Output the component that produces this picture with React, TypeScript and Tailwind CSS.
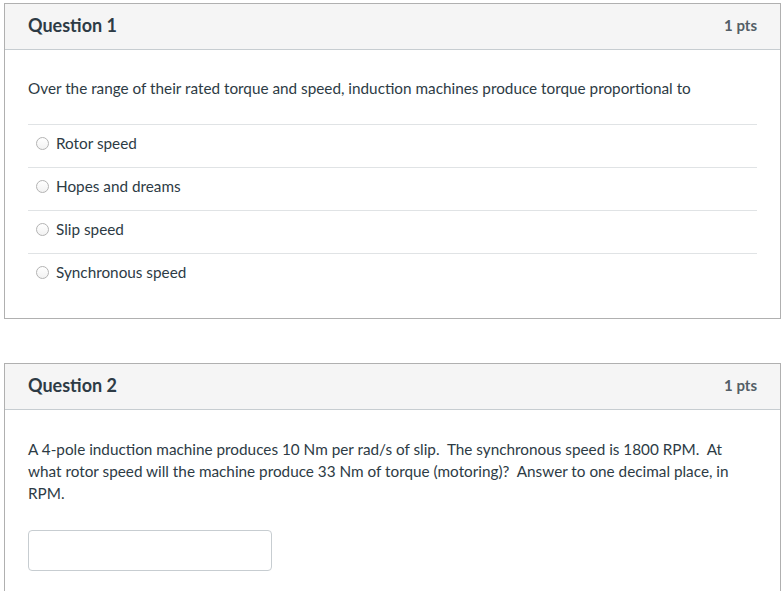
const OPTIONS = ['Rotor speed', 'Hopes and dreams', 'Slip speed', 'Synchronous speed']

function Header({ title }: { title: string }) {
  return (
    <div className="flex items-center justify-between h-[46px] pb-[2px] px-[23px] bg-[#f5f5f5] border-b border-[#c7cdd1]">
      <div className="text-[18px] font-bold text-[#2d3b45]">{title}</div>
      <div className="text-[15px] font-bold text-[#535e66]">1 pts</div>
    </div>
  )
}

export default function App() {
  return (
    <div className="min-h-[591px] bg-white pl-[4px] pr-[2px] pt-[3px] text-[#2d3b45]" style={{ fontFamily: 'Lato, "Open Sans", sans-serif' }}>
      {/* question 1 */}
      <div className="border border-[#b0b0b0]">
        <Header title="Question 1" />
        <div className="px-[23px] pt-[27px] pb-[22px]">
          <p className="text-[15.3px] leading-[22px] mb-[25px]">
            Over the range of their rated torque and speed, induction machines produce torque proportional to
          </p>
          <div>
            {OPTIONS.map(o => (
              <div key={o} className="flex items-center gap-[7px] h-[43px] pb-[5px] border-t border-[#e0e3e5] pl-[8px]">
                <span className="w-[13px] h-[13px] rounded-full border border-[#b3b3b3] bg-gradient-to-b from-white to-[#f2f2f2]" />
                <span className="text-[15.3px]">{o}</span>
              </div>
            ))}
          </div>
        </div>
      </div>

      {/* question 2 */}
      <div className="mt-[44px] border border-[#b0b0b0] border-b-0">
        <Header title="Question 2" />
        <div className="px-[23px] pt-[28px] pb-[20px]">
          <p className="text-[15.3px] leading-[22px] pr-[20px]">
            A 4-pole induction machine produces 10 Nm per rad/s of slip.&nbsp; The synchronous speed is 1800 RPM.&nbsp; At what rotor speed will the machine produce 33 Nm of torque (motoring)?&nbsp; Answer to one decimal place, in RPM.
          </p>
          <input
            type="text"
            className="mt-[26px] w-[244px] h-[41px] rounded-[4px] border border-[#c7cdd1] bg-white"
          />
        </div>
        <div className="h-[20px] bg-gradient-to-b from-white to-[#f7f7f7]" />
      </div>
    </div>
  )
}
